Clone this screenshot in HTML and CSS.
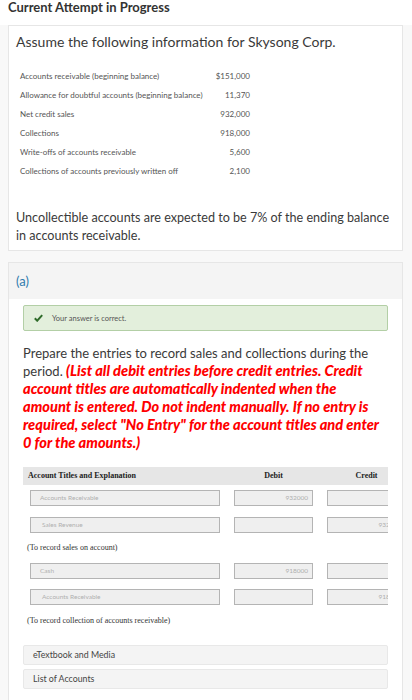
FILE: index.html
```html
<!DOCTYPE html>
<html>
<head>
<meta charset="utf-8">
<link rel="stylesheet" href="styles.css">
</head>
<body>
<div class="page-title">Current Attempt in Progress</div>

<section class="card intro">
  <p class="lead first-lead">Assume the following information for Skysong Corp.</p>
  <div class="data">
    <div class="dl">Accounts receivable (beginning balance)</div><div class="dv">$151,000</div>
    <div class="dl">Allowance for doubtful accounts (beginning balance)</div><div class="dv">11,370</div>
    <div class="dl">Net credit sales</div><div class="dv">932,000</div>
    <div class="dl">Collections</div><div class="dv">918,000</div>
    <div class="dl">Write-offs of accounts receivable</div><div class="dv">5,600</div>
    <div class="dl">Collections of accounts previously written off</div><div class="dv">2,100</div>
  </div>
  <p class="lead tail">Uncollectible accounts are expected to be 7% of the ending balance in accounts receivable.</p>
</section>

<section class="card part">
  <div class="part-head">(a)</div>
  <div class="part-body">
    <div class="correct">
      <svg class="check" width="9" height="8" viewBox="0 0 9 8"><path d="M0.8 4.3 L3.2 6.7 L8.2 1.2" fill="none" stroke="#2f6b2a" stroke-width="2"/></svg>
      <span>Your answer is correct.</span>
    </div>
    <p class="prompt">Prepare the entries to record sales and collections during the period. <em class="warn">(List all debit entries before credit entries. Credit account titles are automatically indented when the amount is entered. Do not indent manually. If no entry is required, select "No Entry" for the account titles and enter 0 for the amounts.)</em></p>

    <div class="journal">
      <div class="jrow jhead">
        <div class="h-acct">Account Titles and Explanation</div>
        <div class="h-num">Debit</div>
        <div class="h-num">Credit</div>
      </div>
      <div class="jrow r1">
        <div class="fld acct">Accounts Receivable</div>
        <div class="fld num">932000</div>
        <div class="fld num"></div>
      </div>
      <div class="jrow r2">
        <div class="fld acct indent">Sales Revenue</div>
        <div class="fld num"></div>
        <div class="fld num">932000</div>
      </div>
      <div class="note n1">(To record sales on account)</div>
      <div class="jrow r3">
        <div class="fld acct">Cash</div>
        <div class="fld num">918000</div>
        <div class="fld num"></div>
      </div>
      <div class="jrow r4">
        <div class="fld acct indent">Accounts Receivable</div>
        <div class="fld num"></div>
        <div class="fld num">918000</div>
      </div>
      <div class="note n2">(To record collection of accounts receivable)</div>
    </div>

    <div class="btn b1">eTextbook and Media</div>
    <div class="btn b2">List of Accounts</div>
  </div>
</section>
</body>
</html>
```

FILE: styles.css
```css
html, body {
  margin: 0;
  padding: 0;
}
body {
  background: #f8f8f8;
  font-family: Lato, "Open Sans", Arial, sans-serif;
  color: #333;
  width: 412px;
  overflow: hidden;
}
.page-title {
  font-weight: 700;
  font-size: 13px;
  line-height: 15px;
  padding: 0 0 0 8px;
  color: #333;
  height: 25px;
  background: #fff;
}
.card {
  margin: 0 9px 0 8px;
  background: #fff;
  border: 1px solid #e6e6e6;
}
.intro {
  padding: 7px 3px 5px 7px;
}
.lead {
  margin: 0;
  font-size: 12.6px;
  line-height: 18px;
  color: #3a3a3a;
}
.first-lead {
  font-size: 14px;
}
.data {
  display: grid;
  grid-template-columns: 1fr auto;
  width: 230px;
  margin: 16px 0 0 4px;
  font-size: 8px;
  color: #555;
}
.dl, .dv {
  height: 19px;
  line-height: 19px;
  white-space: nowrap;
}
.dv {
  text-align: right;
}
.tail {
  margin-top: 28px;
}
.part {
  margin-top: 11px;
  height: 460px;
}
.part-head {
  background: #f4f4f4;
  height: 36px;
  line-height: 36px;
  padding-left: 7px;
  font-size: 13px;
  color: #2f7aad;
}
.part-body {
  padding: 6px 14px 0 14px;
}
.correct {
  display: flex;
  align-items: center;
  gap: 9px;
  height: 24px;
  padding-left: 10px;
  background: #e3efdc;
  border: 1px solid #b3cfa6;
  border-radius: 2px;
  font-size: 7.5px;
  color: #555;
}
.prompt {
  margin: 14px 3px 0 0;
  font-size: 13px;
  line-height: 17px;
  color: #3a3a3a;
}
.warn {
  color: #f00;
  font-size: 14.6px;
  line-height: 17px;
  font-weight: 900;
  font-style: italic;
}
.journal {
  margin-top: 15px;
  overflow: hidden;
  font-family: "Liberation Serif", "Times New Roman", serif;
}
.jrow {
  display: grid;
  grid-template-columns: 190px 79px 79px;
  column-gap: 14px;
  padding-left: 7px;
}
.jhead {
  height: 18px;
  line-height: 18px;
  background: #e6e6e6;
  font-weight: 700;
  font-size: 8px;
  color: #222;
}
.r1 { margin-top: 5px; }
.r2 { margin-top: 11px; }
.r3 { margin-top: 5px; }
.r4 { margin-top: 10px; }
.h-acct {
  margin-left: -2px;
}
.h-num {
  text-align: center;
}
.fld {
  box-sizing: border-box;
  height: 16px;
  line-height: 14px;
  border: 1px solid #b4b4b4;
  background: #efefef;
  font-family: Lato, "Open Sans", Arial, sans-serif;
  font-size: 6.5px;
  color: #b0b0b0;
  white-space: nowrap;
  overflow: hidden;
}
.acct {
  padding-left: 9px;
}
.acct.indent {
  padding-left: 11px;
}
.num {
  text-align: right;
  padding-right: 4px;
}
.note {
  margin-left: 4px;
  height: 20px;
  line-height: 20px;
  font-size: 8px;
  color: #333;
}
.n1 { margin-top: 5px; }
.n2 { margin-top: 6px; }
.btn {
  box-sizing: border-box;
  height: 20px;
  line-height: 18px;
  padding-left: 9px;
  background: #f4f4f4;
  border: 1px solid #e8e8e8;
  border-radius: 2px;
  font-size: 8.8px;
  color: #444;
}
.b1 { margin-top: 14px; }
.b2 { margin-top: 4px; }
```
